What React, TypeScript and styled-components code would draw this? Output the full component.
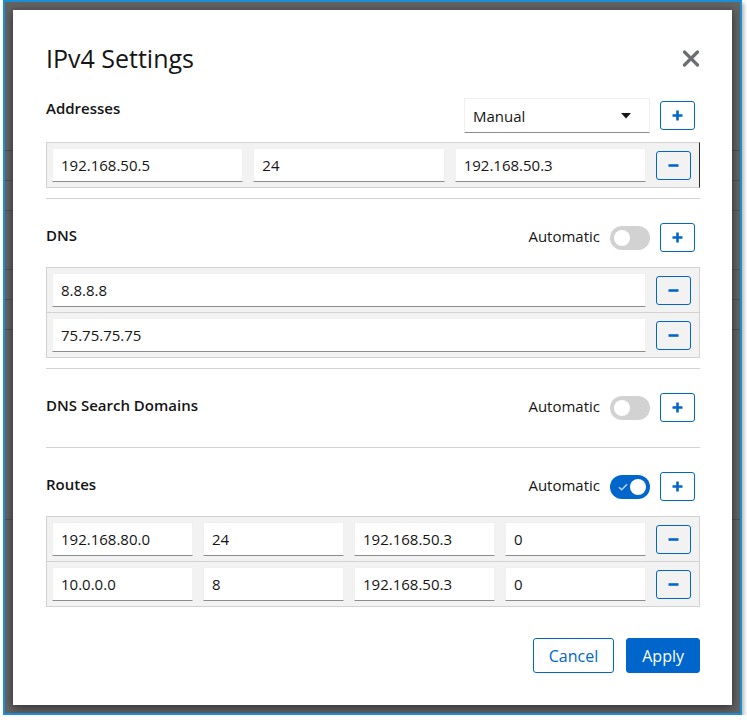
import React from "react";
import styled, { createGlobalStyle } from "styled-components";

const GlobalStyle = createGlobalStyle`
  html, body {
    margin: 0;
    padding: 0;
    background: #ffffff;
    font-family: "Open Sans", "Noto Sans", sans-serif;
    color: #151515;
  }
  * { box-sizing: border-box; }
`;

const Frame = styled.div`
  position: relative;
  margin-left: 3px;
  width: 739px;
  height: 715px;
  border: 2px solid #1a8fd3;
  box-shadow: 2px 3px 4px rgba(0, 0, 0, 0.3);
  overflow: hidden;
  background: #ffffff;
`;

/* the page that sits underneath the dialog */
const UnderPage = styled.div`
  padding-top: 119px;
`;

const UnderRow = styled.div<{ $h: number }>`
  height: ${(p) => p.$h}px;
  border-bottom: 1px solid #d2d2d2;
`;

const Backdrop = styled.div`
  position: absolute;
  inset: 0;
  background: rgba(3, 3, 3, 0.62);
  padding: 8px;
  display: flex;
  justify-content: center;
  align-items: flex-start;
`;

const Modal = styled.div`
  width: 719px;
  background: #ffffff;
  box-shadow: 0 4px 10px rgba(3, 3, 3, 0.35), 0 0 6px rgba(3, 3, 3, 0.25);
  padding: 28px 32px 32px 33px;
  display: flex;
  flex-direction: column;
`;

const TitleRow = styled.div`
  height: 40px;
  display: flex;
  align-items: center;
  justify-content: space-between;
  margin-bottom: 20px;
`;

const Title = styled.h1`
  margin: 0;
  font-size: 25px;
  font-weight: 400;
  line-height: 40px;
  color: #151515;
`;

const CloseButton = styled.button`
  border: 0;
  background: none;
  padding: 0;
  width: 18px;
  height: 18px;
  display: flex;
  align-items: center;
  justify-content: center;
  cursor: pointer;
`;

const Section = styled.section<{ $first?: boolean; $last?: boolean }>`
  padding-top: ${(p) => (p.$first ? 0 : 24)}px;
  padding-bottom: ${(p) => (p.$last ? 0 : 10)}px;
  border-bottom: ${(p) => (p.$last ? "none" : "1px solid #d2d2d2")};
`;

const SectionHead = styled.div<{ $gap: number; $top?: boolean }>`
  display: flex;
  justify-content: space-between;
  align-items: ${(p) => (p.$top ? "flex-start" : "center")};
  margin-bottom: ${(p) => p.$gap}px;
  padding-right: 5px;
`;

const Label = styled.h2<{ $top?: boolean }>`
  margin: 0;
  font-size: 15px;
  font-weight: 600;
  line-height: 24px;
  color: #151515;
  padding-bottom: ${(p) => (p.$top ? 0 : 5)}px;
  margin-top: ${(p) => (p.$top ? -2 : 0)}px;
`;

const Controls = styled.div`
  display: flex;
  align-items: center;
  gap: 10px;
`;

const SwitchText = styled.span`
  font-size: 15px;
  line-height: 24px;
  padding-bottom: 3px;
  color: #151515;
`;

const Toggle = styled.span<{ $on?: boolean }>`
  position: relative;
  width: 40px;
  height: 24px;
  border-radius: 12px;
  background: ${(p) => (p.$on ? "#0066cc" : "#d2d2d2")};
  display: inline-flex;
  align-items: center;
  padding-left: 8px;
`;

const Knob = styled.span<{ $on?: boolean }>`
  position: absolute;
  top: 4px;
  left: ${(p) => (p.$on ? 20 : 4)}px;
  width: 16px;
  height: 16px;
  border-radius: 50%;
  background: #ffffff;
`;

const IconButton = styled.button`
  width: 35px;
  height: 29px;
  flex: 0 0 35px;
  border: 1px solid #0066cc;
  border-radius: 3px;
  background: transparent;
  display: flex;
  align-items: center;
  justify-content: center;
  padding: 0;
  cursor: pointer;
`;

const Select = styled.div`
  width: 186px;
  height: 35px;
  border: 1px solid #f0f0f0;
  border-bottom-color: #8a8d90;
  border-radius: 1px;
  padding: 0 18px 0 8px;
  display: flex;
  align-items: center;
  justify-content: space-between;
  font-size: 15px;
  color: #151515;
  background: #ffffff;
`;

const ListBox = styled.div<{ $darkEdge?: boolean }>`
  border: 1px solid #d2d2d2;
  border-right-color: ${(p) => (p.$darkEdge ? "#2b2b2b" : "#d2d2d2")};
  background: #f2f2f2;
`;

const ListRow = styled.div`
  display: flex;
  align-items: center;
  gap: 10px;
  padding: 5px 8px 5px 5px;
  & + & {
    border-top: 1px solid #d2d2d2;
  }
`;

const Field = styled.input`
  flex: 1 1 0;
  min-width: 0;
  height: 34px;
  border: 1px solid #f0f0f0;
  border-bottom-color: #8a8d90;
  border-radius: 1px;
  background: #ffffff;
  padding: 0 8px;
  font-family: "Open Sans", "Noto Sans", sans-serif;
  font-size: 15px;
  color: #151515;
  outline: none;
`;

const Footer = styled.div`
  margin-top: 31px;
  display: flex;
  justify-content: flex-end;
  gap: 12px;
`;

const ActionButton = styled.button<{ $primary?: boolean }>`
  height: 35px;
  padding: 0 15px;
  border-radius: 3px;
  border: 1px solid #0066cc;
  background: ${(p) => (p.$primary ? "#0066cc" : "#ffffff")};
  color: ${(p) => (p.$primary ? "#ffffff" : "#0066cc")};
  font-family: "Open Sans", "Noto Sans", sans-serif;
  font-size: 16px;
  cursor: pointer;
`;

const TimesIcon = () => (
  <svg width="18" height="17" viewBox="0 0 18 17" aria-hidden="true">
    <path
      d="M2.5 2 L15.5 15 M15.5 2 L2.5 15"
      stroke="#6a6e73"
      strokeWidth="3.2"
      strokeLinecap="round"
    />
  </svg>
);

const PlusIcon = () => (
  <svg width="11" height="11" viewBox="0 0 11 11" aria-hidden="true">
    <path d="M5.5 0.5 V10.5 M0.5 5.5 H10.5" stroke="#0066cc" strokeWidth="2.6" />
  </svg>
);

const MinusIcon = () => (
  <svg width="11" height="11" viewBox="0 0 11 11" aria-hidden="true">
    <path d="M0.5 5.5 H10.5" stroke="#0066cc" strokeWidth="2.6" />
  </svg>
);

const CaretIcon = () => (
  <svg width="10" height="6" viewBox="0 0 10 6" aria-hidden="true">
    <path d="M0 0 H10 L5 5.5 Z" fill="#151515" />
  </svg>
);

const CheckIcon = () => (
  <svg width="10" height="8" viewBox="0 0 10 8" aria-hidden="true">
    <path
      d="M1 4.2 L3.7 6.8 L9 1.3"
      fill="none"
      stroke="#b8d6f5"
      strokeWidth="1.5"
    />
  </svg>
);

const Switch = ({ on }: { on?: boolean }) => (
  <Controls>
    <SwitchText>Automatic</SwitchText>
    <Toggle $on={on}>
      {on && <CheckIcon />}
      <Knob $on={on} />
    </Toggle>
  </Controls>
);

const Add = () => (
  <IconButton aria-label="Add">
    <PlusIcon />
  </IconButton>
);

const Remove = () => (
  <IconButton aria-label="Remove">
    <MinusIcon />
  </IconButton>
);

const Entries = ({ rows, darkEdge }: { rows: string[][]; darkEdge?: boolean }) => (
  <ListBox $darkEdge={darkEdge}>
    {rows.map((cells, i) => (
      <ListRow key={i}>
        {cells.map((v, j) => (
          <Field key={j} defaultValue={v} readOnly />
        ))}
        <Remove />
      </ListRow>
    ))}
  </ListBox>
);

const underRows = [30, 30, 30, 59, 30, 30, 190];

export default function App() {
  return (
    <>
      <GlobalStyle />
      <Frame>
        <UnderPage>
          {underRows.map((h, i) => (
            <UnderRow key={i} $h={h} />
          ))}
        </UnderPage>
        <Backdrop>
          <Modal role="dialog" aria-label="IPv4 Settings">
            <TitleRow>
              <Title>IPv4 Settings</Title>
              <CloseButton aria-label="Close">
                <TimesIcon />
              </CloseButton>
            </TitleRow>

            <Section $first>
              <SectionHead $gap={9} $top>
                <Label $top>Addresses</Label>
                <Controls>
                  <Select>
                    <span>Manual</span>
                    <CaretIcon />
                  </Select>
                  <Add />
                </Controls>
              </SectionHead>
              <Entries darkEdge rows={[["192.168.50.5", "24", "192.168.50.3"]]} />
            </Section>

            <Section>
              <SectionHead $gap={15}>
                <Label>DNS</Label>
                <Controls>
                  <Switch />
                  <Add />
                </Controls>
              </SectionHead>
              <Entries rows={[["8.8.8.8"], ["75.75.75.75"]]} />
            </Section>

            <Section>
              <SectionHead $gap={15}>
                <Label>DNS Search Domains</Label>
                <Controls>
                  <Switch />
                  <Add />
                </Controls>
              </SectionHead>
            </Section>

            <Section $last>
              <SectionHead $gap={15}>
                <Label>Routes</Label>
                <Controls>
                  <Switch on />
                  <Add />
                </Controls>
              </SectionHead>
              <Entries
                rows={[
                  ["192.168.80.0", "24", "192.168.50.3", "0"],
                  ["10.0.0.0", "8", "192.168.50.3", "0"],
                ]}
              />
            </Section>

            <Footer>
              <ActionButton>Cancel</ActionButton>
              <ActionButton $primary>Apply</ActionButton>
            </Footer>
          </Modal>
        </Backdrop>
      </Frame>
    </>
  );
}
